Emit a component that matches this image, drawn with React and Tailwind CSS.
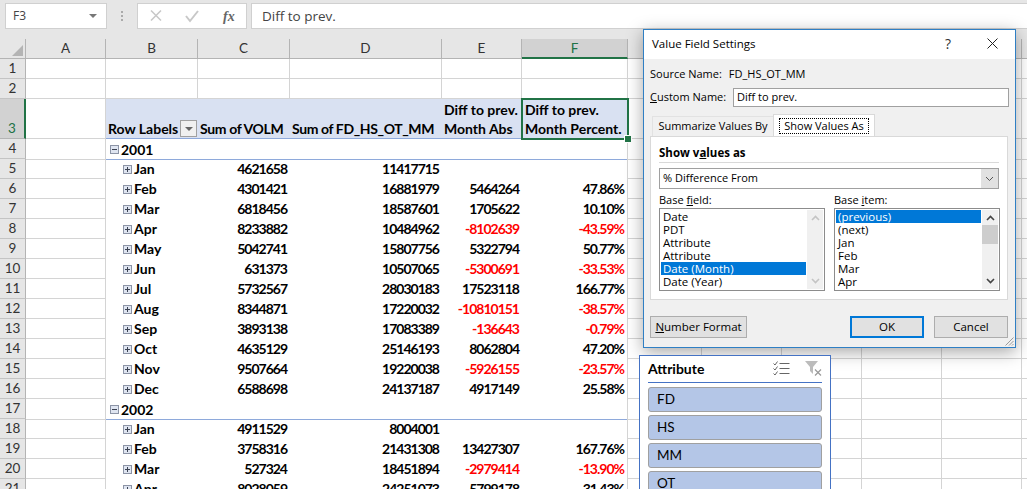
const sheetFont = { fontFamily: 'Lato, "Liberation Sans", sans-serif' };

const months2001 = [
  ['Jan', '4621658', '11417715', '', ''],
  ['Feb', '4301421', '16881979', '5464264', '47.86%'],
  ['Mar', '6818456', '18587601', '1705622', '10.10%'],
  ['Apr', '8233882', '10484962', '-8102639', '-43.59%'],
  ['May', '5042741', '15807756', '5322794', '50.77%'],
  ['Jun', '631373', '10507065', '-5300691', '-33.53%'],
  ['Jul', '5732567', '28030183', '17523118', '166.77%'],
  ['Aug', '8344871', '17220032', '-10810151', '-38.57%'],
  ['Sep', '3893138', '17083389', '-136643', '-0.79%'],
  ['Oct', '4635129', '25146193', '8062804', '47.20%'],
  ['Nov', '9507664', '19220038', '-5926155', '-23.57%'],
  ['Dec', '6588698', '24137187', '4917149', '25.58%'],
];

const months2002 = [
  ['Jan', '4911529', '8004001', '', ''],
  ['Feb', '3758316', '21431308', '13427307', '167.76%'],
  ['Mar', '527324', '18451894', '-2979414', '-13.90%'],
  ['Apr', '8028059', '24251073', '5799178', '31.43%'],
];

const gridCols = 'grid grid-cols-[26px_80px_92px_92px_152px_80px_106px_74px_80px_80px_80px_80px_80px]';
const headCell = 'flex items-end whitespace-nowrap bg-[#d9e1f2] pb-[1px] pl-[2px] text-[14px] font-bold leading-[19px] text-black shadow-[inset_0_-1px_0_#8ea9db]';

function Toggle({ open }) {
  return (
    <span className="relative inline-block h-[9px] w-[9px] shrink-0 border border-[#8c94a6] bg-[#dfe5f1]">
      <span className="absolute left-[1px] top-[3px] h-px w-[5px] bg-[#3b4252]" />
      {!open && <span className="absolute left-[3px] top-[1px] h-[5px] w-px bg-[#3b4252]" />}
    </span>
  );
}

function RowNum({ n, active, tall }) {
  return (
    <div className={`flex items-end justify-center border-r border-b text-[13.5px] leading-[19px] ${active ? 'border-r-2 border-r-[#217346] border-b-[#b4b4b4] bg-[#d2d2d2] text-[#217346]' : 'border-r-[#b4b4b4] border-b-[#c4c4c4] bg-[#e6e6e6] text-[#333]'} ${tall ? 'h-10' : 'h-5'}`}>
      {n}
    </div>
  );
}

function EmptyCells({ count }) {
  return Array.from({ length: count }).map((_, i) => (
    <div key={i} className="border-r border-b border-[#d4d4d4]" />
  ));
}

function Value({ children, last }) {
  const red = String(children).startsWith('-');
  return (
    <div className={`pr-[3px] text-right text-[14px] font-bold leading-[20px] tracking-[-1px] ${red ? 'text-[#ff0000]' : 'text-black'} ${last ? 'border-r border-[#d4d4d4]' : ''}`}>
      {children}
    </div>
  );
}

function MonthRow({ n, row }) {
  return (
    <div className={`${gridCols} h-5`}>
      <RowNum n={n} />
      <div className="border-r border-b border-[#d4d4d4]" />
      <div className="flex items-center gap-[2px] pl-[17px] text-[14px] font-bold leading-[20px] text-black">
        <Toggle />
        <span>{row[0]}</span>
      </div>
      <Value>{row[1]}</Value>
      <Value>{row[2]}</Value>
      <Value>{row[3]}</Value>
      <Value last>{row[4]}</Value>
      <EmptyCells count={6} />
    </div>
  );
}

function YearRow({ n, year }) {
  return (
    <div className={`${gridCols} h-5`}>
      <RowNum n={n} />
      <div className="border-r border-b border-[#d4d4d4]" />
      <div className="col-span-5 flex items-center gap-[2px] border-r border-b border-r-[#d4d4d4] border-b-[#8ea9db] pt-px pl-[4px] text-[14px] font-bold leading-[19px] text-black">
        <Toggle open />
        <span>{year}</span>
      </div>
      <EmptyCells count={6} />
    </div>
  );
}

function ColHead({ children, active }) {
  return (
    <div className={`flex h-5 items-center justify-center border-r text-[13.5px] ${active ? 'border-b-2 border-r-[#b4b4b4] border-b-[#217346] bg-[#d2d2d2] text-[#217346]' : 'border-b border-[#b4b4b4] bg-[#e6e6e6] text-[#333]'}`}>
      {children}
    </div>
  );
}

function FormulaBar() {
  return (
    <div className="flex h-[39px] items-start bg-[#e6e6e6] pt-[3px] pl-[5px]" style={{ fontFamily: '"Open Sans", sans-serif' }}>
      <div className="flex h-[26px] w-[102px] items-center justify-between border border-[#d0d0d0] bg-white pr-[9px] pl-[7px] text-[12px] text-[#444]">
        F3
        <span className="h-0 w-0 border-x-[4px] border-t-[4px] border-x-transparent border-t-[#777]" />
      </div>
      <div className="mx-[6px] flex h-[26px] w-[18px] flex-col items-center justify-center gap-[2px]">
        <span className="h-[2px] w-[2px] bg-[#aaa]" />
        <span className="h-[2px] w-[2px] bg-[#aaa]" />
        <span className="h-[2px] w-[2px] bg-[#aaa]" />
      </div>
      <div className="relative mr-[4px] flex h-[26px] w-[110px] items-center border border-[#d0d0d0] bg-white">
        <svg width="108" height="24" viewBox="0 0 108 24" fill="none">
          <path d="M13 6.500l10 10M23 6.500l-10 10" stroke="#c8c8c8" strokeWidth="1.600" />
          <path d="M48 12l4 5 8-10" stroke="#c8c8c8" strokeWidth="2" />
        </svg>
        <span className="absolute left-[85px] text-[14px] font-bold italic text-[#666]" style={{ fontFamily: '"Liberation Serif", serif' }}>fx</span>
      </div>
      <div className="flex h-[26px] flex-1 items-center border-y border-l border-[#d0d0d0] bg-white pl-[10px] text-[13.5px] text-[#444]">
        Diff to prev.
      </div>
    </div>
  );
}

function FieldList({ items, selected, dark, thumb }) {
  return (
    <div className="flex h-[83px] w-[166px] gap-[1px] border border-[#8c8c8c] bg-white p-[1px]">
      <div className="flex-1">
        {items.map((item) => (
          <div key={item} className={`h-[13px] pl-[2px] text-[11.5px] leading-[13px] ${item === selected ? 'bg-[#0078d7] text-white' : 'text-black'}`}>
            {item}
          </div>
        ))}
      </div>
      <div className="relative flex w-[16px] flex-col items-center justify-between bg-[#f0f0f0] py-[5px]">
        <svg width="9" height="6" viewBox="0 0 9 6"><path d="M1 5l3.500-3.500L8 5" fill="none" stroke={dark ? '#444' : '#c4c4c4'} strokeWidth="1.600" /></svg>
        {thumb && <span className="absolute top-[15px] h-[19px] w-[16px] bg-[#cdcdcd]" />}
        <svg width="9" height="6" viewBox="0 0 9 6"><path d="M1 1l3.500 3.500L8 1" fill="none" stroke={dark ? '#444' : '#c4c4c4'} strokeWidth="1.600" /></svg>
      </div>
    </div>
  );
}

function DialogButton({ children, primary, className }) {
  return (
    <div className={`flex h-[22px] items-center justify-center bg-[#e1e1e1] text-[11.5px] text-black ${primary ? 'border-2 border-[#0078d7]' : 'border border-[#adadad]'} ${className || ''}`}>
      {children}
    </div>
  );
}

function Dialog() {
  return (
    <div className="absolute left-[643px] top-[29px] h-[319px] w-[373px] border border-[#2f7fc4] bg-[#f0f0f0] shadow-[0_4px_16px_rgba(0,0,0,0.35)]" style={{ fontFamily: '"Open Sans", sans-serif' }}>
      <div className="flex h-[29px] items-center justify-between bg-white pr-[17px] pb-[2px] pl-[8px] text-[11.5px] text-black">
        Value Field Settings
        <div className="flex items-center gap-[36px]">
          <span className="text-[14px] text-[#333]">?</span>
          <svg width="11" height="11" viewBox="0 0 11 11"><path d="M0.500 0.500l10 10M10.500 0.500l-10 10" stroke="#222" strokeWidth="1" /></svg>
        </div>
      </div>
      <div className="flex gap-[7px] pt-[7px] pl-[6px] text-[11px] leading-[16px] text-black">
        <span>Source Name:</span>
        <span>FD_HS_OT_MM</span>
      </div>
      <div className="mt-[6px] flex items-center pr-[6px] pl-[6px] text-[11px] text-black">
        <span className="w-[83px]"><u>C</u>ustom Name:</span>
        <div className="flex h-[19px] flex-1 items-center border border-[#a0a0a0] bg-white pl-[3px]">Diff to prev.</div>
      </div>
      <div className="mt-[7px] flex pl-[8px] text-[11px] text-black">
        <div className="mt-[2px] flex h-[20px] w-[121px] items-center justify-center border-t border-l border-[#e2e2e2] tracking-[-0.05px]">Summarize Values By</div>
        <div className="relative z-10 -mb-px flex h-[22px] w-[102px] items-center justify-center border border-b-0 border-[#d9d9d9] bg-white">
          <span className="border border-dotted border-black px-[4px] leading-[14px]">Show Values As</span>
        </div>
      </div>
      <div className="mx-[6px] h-[164px] w-[358px] border border-[#d9d9d9] bg-white px-[8px] pt-[8px]">
        <div className="border-b border-[#d9d9d9] pb-[1px] text-[11.5px] font-bold leading-[16px] text-black">
          Show v<u>a</u>lues as
        </div>
        <div className="mt-[5px] flex h-[21px] items-center justify-between border border-[#a0a0a0] pl-[3px] text-[11px] text-black">
          % Difference From
          <span className="flex h-full w-[17px] items-center justify-center bg-[#e1e1e1]">
            <svg width="9" height="6" viewBox="0 0 9 6"><path d="M1 1l3.500 3.500L8 1" fill="none" stroke="#555" strokeWidth="1" /></svg>
          </span>
        </div>
        <div className="mt-[3px] flex gap-[9px] text-[11px] leading-[16px] text-black">
          <div>
            <div>Base <u>f</u>ield:</div>
            <FieldList items={['Date', 'PDT', 'Attribute', 'Attribute', 'Date (Month)', 'Date (Year)']} selected="Date (Month)" />
          </div>
          <div>
            <div>Base <u>i</u>tem:</div>
            <FieldList items={['(previous)', '(next)', 'Jan', 'Feb', 'Mar', 'Apr']} selected="(previous)" dark thumb />
          </div>
        </div>
      </div>
      <div className="mt-[16px] flex pr-[7px] pl-[6px]">
        <DialogButton className="w-[97px]"><span><u>N</u>umber Format</span></DialogButton>
        <DialogButton primary className="ml-[103px] w-[74px]">OK</DialogButton>
        <DialogButton className="ml-[10px] w-[74px]">Cancel</DialogButton>
      </div>
      <svg className="absolute right-[1px] bottom-[1px]" width="9" height="9" viewBox="0 0 9 9" fill="none" stroke="#9a9a9a">
        <path d="M8.500 0.500l-8 8M8.500 4l-4.500 4.500M8.500 7l-1.500 1.500" />
      </svg>
    </div>
  );
}

function Slicer() {
  return (
    <div className="absolute left-[639px] top-[355px] h-[140px] w-[192px] border border-[#4472c4] bg-white px-[8px]" style={sheetFont}>
      <div className="flex h-[27px] items-center justify-between border-b border-[#4472c4] pb-[2px] text-[14px] font-bold text-black">
        Attribute
        <div className="flex items-center gap-[15px]">
          <svg width="17" height="15" viewBox="0 0 17 15" fill="none" stroke="#666">
            <path d="M0.500 2.500l1.500 1.500L4.500 0.500M0.500 7.500l1.500 1.500L4.500 5.500M0.500 12.500l1.500 1.500L4.500 10.500" />
            <path d="M6.500 2.500h10M6.500 7.500h10M6.500 12.500h10" />
          </svg>
          <svg width="17" height="16" viewBox="0 0 17 16">
            <path d="M0 1h13L8 7v7L5 11V7z" fill="#bcbcbc" />
            <path d="M10 9.500l6 6M16 9.500l-6 6" stroke="#999" strokeWidth="1.200" />
          </svg>
        </div>
      </div>
      <div className="mt-[4px] flex flex-col gap-[3px]">
        {['FD', 'HS', 'MM', 'OT'].map((item) => (
          <div key={item} className="flex h-[25px] items-center rounded-[3px] border border-[#a0a0a0] bg-[#b4c6e7] pl-[8px] text-[13.5px] text-black">
            {item}
          </div>
        ))}
      </div>
    </div>
  );
}

export default function App() {
  return (
    <div className="relative h-[489px] w-[1027px] overflow-hidden bg-white">
      <FormulaBar />
      <div style={sheetFont}>
        <div className={gridCols}>
          <div className="relative h-5 border-r border-b border-[#b4b4b4] bg-[#e6e6e6]">
            <span className="absolute right-[2px] bottom-[2px] h-0 w-0 border-b-[11px] border-l-[11px] border-b-[#b4b4b4] border-l-transparent" />
          </div>
          {['A', 'B', 'C', 'D', 'E', 'F', 'G', 'H', 'I', 'J', 'K', 'L'].map((c) => (
            <ColHead key={c} active={c === 'F'}>{c}</ColHead>
          ))}
        </div>
        {[1, 2].map((n) => (
          <div key={n} className={`${gridCols} h-5`}>
            <RowNum n={n} />
            <EmptyCells count={12} />
          </div>
        ))}
        <div className={`${gridCols} h-10`}>
          <RowNum n={3} active tall />
          <div className="border-r border-b border-[#d4d4d4]" />
          <div className={headCell}>
            Row Labels
            <span className="mb-[1px] ml-auto mr-[1px] flex h-[17px] w-[17px] shrink-0 items-center justify-center border border-[#a0a0a0] bg-[#f0f0f0]">
              <span className="h-0 w-0 border-x-[4px] border-t-[4px] border-x-transparent border-t-[#666]" />
            </span>
          </div>
          <div className={`${headCell} tracking-[-0.36px]`}>Sum of VOLM</div>
          <div className={`${headCell} tracking-[-0.39px]`}>Sum of FD_HS_OT_MM</div>
          <div className={`${headCell} flex-col items-start justify-end`}>
            <span>Diff to prev.</span>
            <span>Month Abs</span>
          </div>
          <div className="relative flex flex-col justify-end bg-[#d9e1f2] pb-[1px] pl-[3px] text-[14px] font-bold leading-[19px] text-black">
            <span>Diff to prev.</span>
            <span>Month Percent.</span>
            <span className="absolute -top-px -right-px -bottom-px -left-px border-2 border-[#217346]" />
            <span className="absolute -right-[3px] -bottom-[3px] h-[6px] w-[6px] bg-[#217346] outline outline-white" />
          </div>
          <EmptyCells count={6} />
        </div>
        <YearRow n={4} year="2001" />
        {months2001.map((row, i) => <MonthRow key={row[0]} n={5 + i} row={row} />)}
        <YearRow n={17} year="2002" />
        {months2002.map((row, i) => <MonthRow key={row[0]} n={18 + i} row={row} />)}
      </div>
      <Dialog />
      <Slicer />
    </div>
  );
}
